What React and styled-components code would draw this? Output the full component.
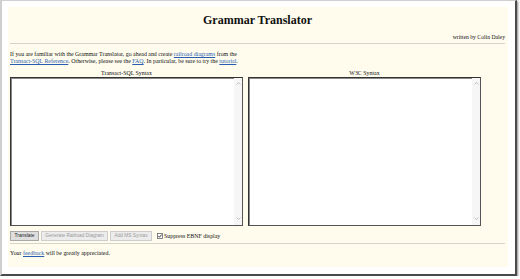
import React from "react";
import styled, { createGlobalStyle } from "styled-components";

const GlobalStyle = createGlobalStyle`
  html, body {
    margin: 0;
    padding: 0;
    background: #ffffff;
  }
  body {
    font-family: "Liberation Serif", "Times New Roman", serif;
  }
`;

const Frame = styled.div`
  box-sizing: border-box;
  width: 517px;
  height: 276px;
  background: #ffffff;
  border-top: 1px solid #cfcfcf;
  border-left: 2px solid #cfcfcf;
  border-right: 2px solid #4a4a4a;
  border-bottom: 2px solid #4a4a4a;
  box-shadow: 1px 1px 2px rgba(0, 0, 0, 0.45);
  padding: 6px 7px 7px 6px;
`;

const Page = styled.div`
  height: 100%;
  background: #fffcee;
  padding: 0 3px 0 2px;
  box-sizing: border-box;
  display: flex;
  flex-direction: column;
  color: #111;
`;

const Title = styled.h1`
  margin: 6px 0 0;
  font-size: 12px;
  line-height: 14px;
  font-weight: bold;
  text-align: center;
`;

const Byline = styled.div`
  margin-top: 7px;
  font-size: 5.7px;
  line-height: 7px;
  text-align: right;
`;

const Rule = styled.div`
  height: 1px;
  background: #d6d3c8;
  margin-top: ${(p) => p.$top}px;
`;

const Intro = styled.p`
  margin: 7px 0 0;
  font-size: 5.9px;
  line-height: 7px;
`;

const Link = styled.a`
  color: #2a5db0;
  text-decoration: underline;
`;

const Editors = styled.div`
  display: flex;
  gap: 5px;
  margin-top: 5px;
`;

const Column = styled.div`
  width: 233px;
  display: flex;
  flex-direction: column;
`;

const Label = styled.div`
  font-size: 5.9px;
  line-height: 7px;
  text-align: center;
`;

const Box = styled.div`
  box-sizing: border-box;
  height: 149px;
  display: flex;
  background: #ffffff;
  border: 1px solid #555;
  border-top-color: #333;
  border-left-color: #333;
  box-shadow: inset 1px 1px 0 #888;
`;

const Input = styled.textarea`
  flex: 1;
  border: none;
  outline: none;
  resize: none;
  background: transparent;
  padding: 0;
`;

const Track = styled.div`
  width: 8px;
  background: #f6f6f6;
  display: flex;
  flex-direction: column;
  justify-content: space-between;
  align-items: center;
  padding: 4px 0 5px;
`;

const Actions = styled.div`
  display: flex;
  align-items: center;
  gap: 2px;
  margin-top: 5px;
  height: 10px;
`;

const Button = styled.button`
  box-sizing: border-box;
  height: 10px;
  width: ${(p) => p.$w}px;
  padding: 0;
  font-family: "Liberation Sans", Arial, sans-serif;
  font-size: 4.8px;
  line-height: 8px;
  color: ${(p) => (p.disabled ? "#9a9a9a" : "#222")};
  background: ${(p) => (p.disabled ? "#ececec" : "#dedede")};
  border: 1px solid ${(p) => (p.disabled ? "#cdcdcd" : "#a8a8a8")};
  border-radius: 0;
`;

const Check = styled.label`
  display: flex;
  align-items: center;
  gap: 1px;
  margin-left: 3px;
  font-size: 5.9px;
  line-height: 7px;
`;

const Footer = styled.p`
  margin: 6px 0 0;
  font-size: 5.9px;
  line-height: 7px;
`;

function Chevron({ up }) {
  return (
    <svg width="5" height="3" viewBox="0 0 5 3">
      <path
        d={up ? "M0.5 2.5 L2.5 0.5 L4.5 2.5" : "M0.5 0.5 L2.5 2.5 L4.5 0.5"}
        fill="none"
        stroke="#b0b0b0"
        strokeWidth="0.8"
      />
    </svg>
  );
}

function Editor({ label }) {
  return (
    <Column>
      <Label>{label}</Label>
      <Box>
        <Input />
        <Track>
          <Chevron up />
          <Chevron />
        </Track>
      </Box>
    </Column>
  );
}

function CheckMark() {
  return (
    <svg width="6" height="6" viewBox="0 0 6 6">
      <rect x="0.5" y="0.5" width="5" height="5" fill="#fff" stroke="#666" strokeWidth="0.8" />
      <path d="M1.4 3 L2.5 4.2 L4.6 1.6" fill="none" stroke="#222" strokeWidth="0.9" />
    </svg>
  );
}

export default function App() {
  return (
    <>
      <GlobalStyle />
      <Frame>
        <Page>
          <Title>Grammar Translator</Title>
          <Byline>written by Colin Daley</Byline>
          <Rule $top={2} />
          <Intro>
            If you are familiar with the Grammar Translator, go ahead and create{" "}
            <Link href="#">railroad diagrams</Link> from the
            <br />
            <Link href="#">Transact-SQL Reference</Link>. Otherwise, please see the{" "}
            <Link href="#">FAQ</Link>. In particular, be sure to try the{" "}
            <Link href="#">tutorial</Link>.
          </Intro>
          <Editors>
            <Editor label="Transact-SQL Syntax" />
            <Editor label="W3C Syntax" />
          </Editors>
          <Actions>
            <Button $w={29}>Translate</Button>
            <Button $w={67} disabled>Generate Railroad Diagram</Button>
            <Button $w={42} disabled>Add MS Syntax</Button>
            <Check>
              <CheckMark />
              Suppress EBNF display
            </Check>
          </Actions>
          <Rule $top={2} />
          <Footer>
            Your <Link href="#">feedback</Link> will be greatly appreciated.
          </Footer>
        </Page>
      </Frame>
    </>
  );
}
